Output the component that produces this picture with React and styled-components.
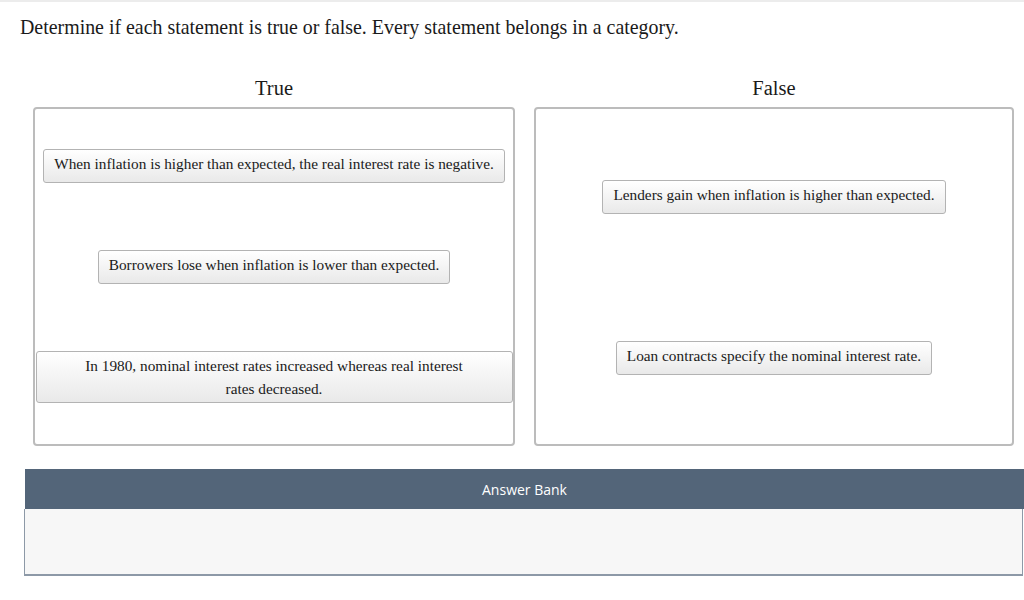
import styled, { createGlobalStyle } from "styled-components";

const GlobalStyle = createGlobalStyle`
  body {
    margin: 0;
    background: #fff;
    font-family: "Liberation Serif", "Times New Roman", serif;
    color: #1a1a1a;
  }
`;

const columns = [
  {
    title: "True",
    top: 40,
    gap: 67,
    width: 482,
    cards: [
      { text: "When inflation is higher than expected, the real interest rate is negative." },
      { text: "Borrowers lose when inflation is lower than expected." },
      {
        text: "In 1980, nominal interest rates increased whereas real interest rates decreased.",
        wide: true,
      },
    ],
  },
  {
    title: "False",
    top: 71,
    gap: 127,
    width: 480,
    cards: [
      { text: "Lenders gain when inflation is higher than expected." },
      { text: "Loan contracts specify the nominal interest rate." },
    ],
  },
];

export default function App() {
  return (
    <>
      <GlobalStyle />
      <Page>
        <Prompt>
          Determine if each statement is true or false. Every statement belongs
          in a category.
        </Prompt>
        <Columns>
          {columns.map((col) => (
            <Column key={col.title} $width={col.width}>
              <Heading>{col.title}</Heading>
              <DropZone $top={col.top} $gap={col.gap}>
                {col.cards.map((card) => (
                  <Card key={card.text} $wide={card.wide}>
                    {card.text}
                  </Card>
                ))}
              </DropZone>
            </Column>
          ))}
        </Columns>
        <Bank>
          <BankHeader>Answer Bank</BankHeader>
          <BankBody />
        </Bank>
      </Page>
    </>
  );
}

const Page = styled.div`
  border-top: 2px solid #ececec;
  padding-top: 14px;
`;

const Prompt = styled.p`
  margin: 0 0 39px 20px;
  font-size: 19.9px;
  line-height: 22px;
`;

const Columns = styled.div`
  display: flex;
  gap: 19px;
  padding-left: 33px;
`;

const Column = styled.div`
  width: ${(p) => p.$width}px;
  display: flex;
  flex-direction: column;
`;

const Heading = styled.h3`
  margin: 0 0 8px;
  font-size: 20.5px;
  font-weight: normal;
  line-height: 22px;
  text-align: center;
`;

const DropZone = styled.div`
  box-sizing: border-box;
  height: 339px;
  border: 2px solid #bcbcbc;
  border-radius: 4px;
  display: flex;
  flex-direction: column;
  align-items: center;
  gap: ${(p) => p.$gap}px;
  padding-top: ${(p) => p.$top}px;
`;

const Card = styled.div`
  box-sizing: border-box;
  border: 1px solid #b3b3b3;
  border-radius: 3px;
  background: linear-gradient(#ffffff, #e9e9e9);
  font-size: 15.3px;
  text-align: center;
  white-space: ${(p) => (p.$wide ? "normal" : "nowrap")};
  width: ${(p) => (p.$wide ? "477px" : "auto")};
  line-height: ${(p) => (p.$wide ? "23px" : "18px")};
  padding: ${(p) => (p.$wide ? "2px 40px 2px" : "5px 10px 9px")};
`;

const Bank = styled.div`
  margin: 23px 0 0 24px;
  width: 999px;
`;

const BankHeader = styled.div`
  height: 40px;
  margin-left: 1px;
  margin-right: -1px;
  background: #536579;
  color: #fff;
  font-family: "Open Sans", "Liberation Sans", sans-serif;
  font-size: 14px;
  display: flex;
  align-items: center;
  justify-content: center;
`;

const BankBody = styled.div`
  height: 65px;
  background: #f7f7f7;
  border: 1px solid #8d99a7;
  border-top: none;
  border-bottom-width: 2px;
`;
